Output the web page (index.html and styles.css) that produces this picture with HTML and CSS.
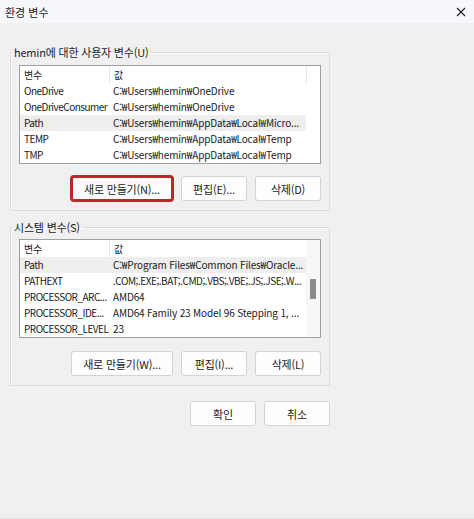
FILE: index.html
```html
<!DOCTYPE html>
<html lang="ko">
<head>
    <meta charset="UTF-8">
    <title>환경 변수</title>
    <link rel="stylesheet" href="styles.css">
</head>
<body>
    <div class="window">
        <div class="titlebar">
            <span class="title">환경 변수</span>
            <svg class="close" width="10" height="10" viewBox="0 0 10 10">
                <path d="M1 1L9 9M9 1L1 9" stroke="#1f1f1f" stroke-width="1.1" fill="none"/>
            </svg>
        </div>

        <div class="content">
            <!-- 사용자 변수 -->
            <fieldset class="group">
                <legend>hemin에 대한 사용자 변수(U)</legend>
                <div class="listview">
                    <div class="lv-head">
                        <span class="cell">변수</span>
                        <span class="cell">값</span>
                    </div>
                    <div class="lv-row"><span class="cell">OneDrive</span><span class="cell">C:₩Users₩hemin₩OneDrive</span></div>
                    <div class="lv-row"><span class="cell">OneDriveConsumer</span><span class="cell">C:₩Users₩hemin₩OneDrive</span></div>
                    <div class="lv-row selected"><span class="cell">Path</span><span class="cell">C:₩Users₩hemin₩AppData₩Local₩Micro...</span></div>
                    <div class="lv-row"><span class="cell">TEMP</span><span class="cell">C:₩Users₩hemin₩AppData₩Local₩Temp</span></div>
                    <div class="lv-row"><span class="cell">TMP</span><span class="cell">C:₩Users₩hemin₩AppData₩Local₩Temp</span></div>
                </div>
                <div class="btn-row">
                    <button class="btn btn-wide btn-marked">새로 만들기(N)...</button>
                    <button class="btn">편집(E)...</button>
                    <button class="btn">삭제(D)</button>
                </div>
            </fieldset>

            <!-- 시스템 변수 -->
            <fieldset class="group group-system">
                <legend>시스템 변수(S)</legend>
                <div class="listview">
                    <div class="lv-head">
                        <span class="cell">변수</span>
                        <span class="cell">값</span>
                    </div>
                    <div class="lv-row selected"><span class="cell">Path</span><span class="cell">C:₩Program Files₩Common Files₩Oracle...</span></div>
                    <div class="lv-row"><span class="cell">PATHEXT</span><span class="cell tight">.COM;.EXE;.BAT;.CMD;.VBS;.VBE;.JS;.JSE;.W...</span></div>
                    <div class="lv-row"><span class="cell">PROCESSOR_ARC...</span><span class="cell">AMD64</span></div>
                    <div class="lv-row"><span class="cell">PROCESSOR_IDE...</span><span class="cell">AMD64 Family 23 Model 96 Stepping 1, ...</span></div>
                    <div class="lv-row"><span class="cell">PROCESSOR_LEVEL</span><span class="cell">23</span></div>
                    <div class="scrollbar"><div class="thumb"></div></div>
                </div>
                <div class="btn-row">
                    <button class="btn btn-wide">새로 만들기(W)...</button>
                    <button class="btn">편집(I)...</button>
                    <button class="btn">삭제(L)</button>
                </div>
            </fieldset>

            <div class="dialog-buttons">
                <button class="btn">확인</button>
                <button class="btn">취소</button>
            </div>
        </div>
    </div>
</body>
</html>
```

FILE: styles.css
```css
body {
    margin: 0;
    background: #f0f0f0;
    color: #1a1a1a;
    font-family: "Noto Sans CJK KR", "Noto Sans", sans-serif;
    font-size: 11px;
}

.window {
    width: 474px;
    height: 519px;
    box-sizing: border-box;
    border-bottom: 1px solid #e4e4e4;
}

.titlebar {
    height: 23px;
    display: flex;
    align-items: center;
    justify-content: space-between;
    padding: 0 8px 0 5px;
    background: #f5f7fb;
}

.title { font-size: 11px; }

.content {
    padding: 21px 0 0 10px;
}

.group {
    width: 320px;
    box-sizing: border-box;
    margin: 0;
    padding: 5px 8px 9px 8px;
    border: 1px solid #dcdcdc;
    box-shadow: inset 1px 1px 0 #fafafa;
}

.group-system {
    margin-top: 8px;
    padding-top: 4px;
}

.group legend {
    padding: 0 2px;
    margin-left: -7px;
    line-height: 16px;
    letter-spacing: -0.2px;
}

.listview {
    position: relative;
    height: 99px;
    box-sizing: border-box;
    border: 1px solid #a0a0a0;
    background: #fff;
    font-size: 10px;
    letter-spacing: -0.15px;
}

.lv-head,
.lv-row {
    display: grid;
    grid-template-columns: 89px 197px;
    width: 286px;
}

.lv-head {
    height: 17px;
    line-height: 17px;
    border-right: 1px solid #e5e5e5;
}

.lv-head .cell + .cell { border-left: 1px solid #e5e5e5; }

.lv-row {
    height: 16px;
    line-height: 16px;
}

.lv-row.selected { background: #eeeeee; }

.cell {
    padding-left: 4px;
    white-space: nowrap;
    overflow: hidden;
}

.lv-row .cell:first-child { letter-spacing: -0.5px; }
.lv-row .cell.tight { letter-spacing: -0.45px; }

.scrollbar {
    position: absolute;
    top: 0;
    right: 0;
    bottom: 0;
    width: 14px;
    background: #f7f7f7;
}

.thumb {
    margin: 39px auto 0;
    width: 6px;
    height: 20px;
    background: #8a8a8a;
    border-radius: 1px;
}

.btn-row {
    display: flex;
    justify-content: flex-end;
    gap: 8px;
    margin-top: 12px;
}

.group-system .btn-row { margin-top: 13px; }

.btn {
    width: 66px;
    height: 25px;
    padding: 0;
    background: #fdfdfd;
    border: 1px solid #d3d3d3;
    border-radius: 3px;
    color: #1b1b1b;
    font: inherit;
    letter-spacing: -0.2px;
}

.btn-wide { width: 102px; }

.btn-marked {
    outline: 3px solid #c3232b;
    outline-offset: -2px;
}

.dialog-buttons {
    width: 320px;
    display: flex;
    justify-content: flex-end;
    gap: 8px;
    margin-top: 15px;
}
```
